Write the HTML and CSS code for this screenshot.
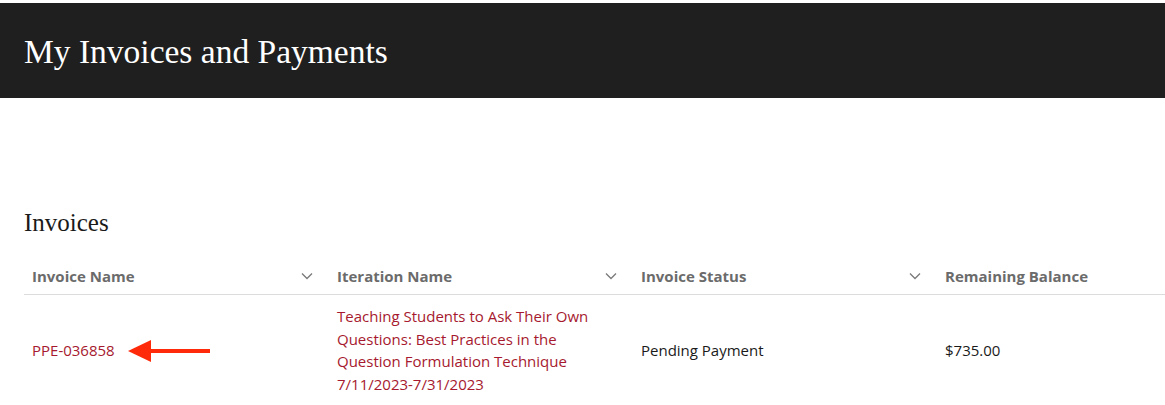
FILE: index.html
```html
<!DOCTYPE html>
<html>
<head>
<meta charset="utf-8">
<link rel="stylesheet" href="styles.css">
</head>
<body>
<header class="banner">
  <h1 class="banner-title">My Invoices and Payments</h1>
</header>
<main class="content">
  <h2 class="section-title">Invoices</h2>
  <div class="table">
    <div class="thead">
      <div class="th"><span>Invoice Name</span><svg class="chev" viewBox="0 0 12 8"><path d="M1 1.5 L6 6.5 L11 1.5"/></svg></div>
      <div class="th"><span>Iteration Name</span><svg class="chev" viewBox="0 0 12 8"><path d="M1 1.5 L6 6.5 L11 1.5"/></svg></div>
      <div class="th"><span>Invoice Status</span><svg class="chev" viewBox="0 0 12 8"><path d="M1 1.5 L6 6.5 L11 1.5"/></svg></div>
      <div class="th"><span>Remaining Balance</span></div>
    </div>
    <div class="trow">
      <div class="td"><a class="link">PPE-036858</a><svg class="arrow" viewBox="0 0 84 24"><path d="M0 12 L23 1 L23 23 Z" fill="#ff2a0a"/><rect x="20" y="10" width="62" height="4" fill="#ff2a0a"/></svg></div>
      <div class="td"><a class="link">Teaching Students to Ask Their Own Questions: Best Practices in the Question Formulation Technique 7/11/2023-7/31/2023</a></div>
      <div class="td">Pending Payment</div>
      <div class="td">$735.00</div>
    </div>
  </div>
</main>
</body>
</html>
```
FILE: styles.css
```css
html, body {
  margin: 0;
  padding: 0;
  background: #fff;
  overflow: hidden;
}
body {
  padding-top: 3px;
  font-family: "Open Sans", "Liberation Sans", sans-serif;
  color: #1a1a1a;
}
.banner {
  background: #1f1f1f;
  height: 95px;
  display: flex;
  align-items: center;
  padding-left: 24px;
}
.banner-title {
  margin: 0;
  color: #fff;
  font-family: "Liberation Serif", "DejaVu Serif", serif;
  font-weight: 400;
  font-size: 33.5px;
  letter-spacing: 0;
  position: relative;
  top: 1px;
}
.content {
  padding-left: 24px;
}
.section-title {
  margin: 109px 0 0 0;
  font-family: "Liberation Serif", "DejaVu Serif", serif;
  font-weight: 400;
  font-size: 25px;
  line-height: 32px;
  color: #1a1a1a;
}
.table {
  margin-top: 18px;
}
.thead, .trow {
  display: grid;
  grid-template-columns: 305px 304px 304px 1fr;
}
.thead {
  height: 38px;
  border-bottom: 1px solid #dcdcdc;
  align-items: center;
  padding-top: 1px;
  box-sizing: border-box;
}
.th {
  display: flex;
  align-items: center;
  justify-content: space-between;
  padding: 0 16px 0 8px;
  font-size: 15px;
  font-weight: 700;
  color: #6b6b6b;
}
.chev {
  width: 12px;
  height: 8px;
  fill: none;
  stroke: #7a7a7a;
  stroke-width: 1.3;
}
.trow {
  align-items: center;
  padding: 10px 0 8px;
}
.td {
  padding: 0 8px;
  font-size: 15px;
  line-height: 22.5px;
  color: #1a1a1a;
  display: flex;
  align-items: center;
}
.link {
  color: #a6192e;
  text-decoration: none;
}
.td:nth-child(2) {
  padding-right: 32px;
}
.arrow {
  width: 84px;
  height: 24px;
  margin-left: 13px;
  position: relative;
  top: 1px;
}
```
